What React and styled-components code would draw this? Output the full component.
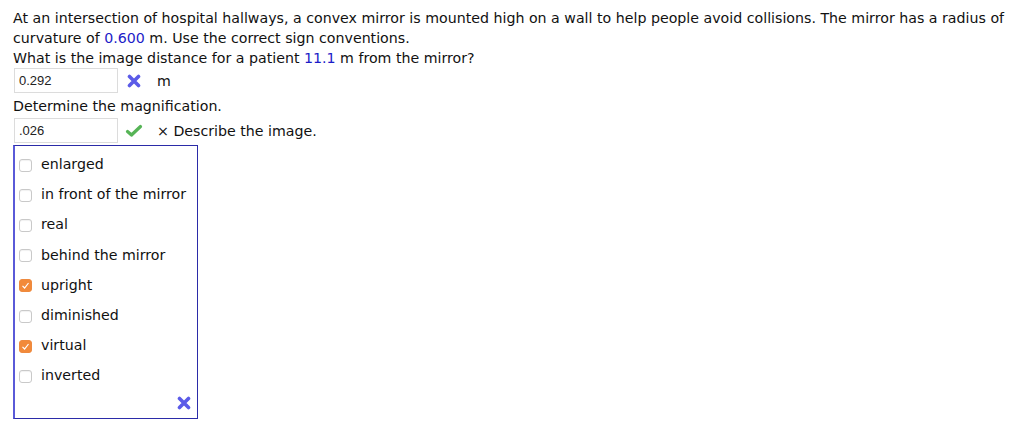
import React from "react";
import styled, { createGlobalStyle } from "styled-components";

const Global = createGlobalStyle`
  html, body { margin: 0; padding: 0; background: #fff; }
  body { font-family: "DejaVu Sans", Verdana, sans-serif; font-size: 14.2px; color: #111; }
`;

const Page = styled.div`
  padding: 8px 13px;
`;

const Para = styled.div`
  line-height: 20px;
`;

const Num = styled.span`
  color: #1c1cc8;
`;

const AnswerRow = styled.div`
  display: flex;
  align-items: center;
  height: 25px;
  margin: ${(p) => p.$mt || 0}px 0 ${(p) => p.$mb || 2}px 1px;
`;

const Input = styled.div`
  box-sizing: border-box;
  width: 104px;
  height: 25px;
  border: 1px solid #dcdcdc;
  padding: 0 4px;
  display: flex;
  align-items: center;
  font-family: "Liberation Sans", Arial, sans-serif;
  font-size: 13px;
  color: #222;
`;

const Mark = styled.span`
  display: inline-flex;
  align-items: center;
  justify-content: center;
  width: 18px;
  height: 16px;
  margin: 0 ${(p) => p.$after || 14}px 0 ${(p) => p.$gap || 8}px;
`;

const Unit = styled.span``;

const Box = styled.div`
  box-sizing: border-box;
  width: 185px;
  height: 274px;
  border: 1px solid #2b2ba8;
  border-left: 2px solid #5a5ad8;
  margin-top: 1px;
  padding: 3px 0 0 4px;
  position: relative;
`;

const Option = styled.label`
  display: flex;
  align-items: center;
  height: 30.2px;
  gap: 9px;
`;

const Check = styled.span`
  box-sizing: border-box;
  flex: none;
  width: 13px;
  height: 13px;
  border-radius: 3px;
  border: 1px solid ${(p) => (p.$on ? "#ee8a3f" : "#c9c9c9")};
  background: ${(p) => (p.$on ? "#f28a3a" : "#fff")};
  box-shadow: ${(p) => (p.$on ? "none" : "inset 0 1px 1px rgba(0,0,0,0.06)")};
  display: inline-flex;
  align-items: center;
  justify-content: center;
  margin-top: 2px;
`;

const BoxMark = styled.span`
  position: absolute;
  right: 6px;
  bottom: 8px;
  width: 14px;
  height: 14px;
  display: flex;
`;

const Cross = ({ size = 14 }) => (
  <svg width={size} height={size} viewBox="0 0 14 14">
    <path d="M2.5 2.5 L11.5 11.5 M11.5 2.5 L2.5 11.5" stroke="#5b5be8" strokeWidth="3.6" strokeLinecap="round" />
  </svg>
);

const Tick = () => (
  <svg width="18" height="14" viewBox="0 0 18 14">
    <path d="M2.5 7.5 L6.5 11 L15.5 2.5" stroke="#56b456" strokeWidth="3.2" fill="none" strokeLinecap="round" strokeLinejoin="round" />
  </svg>
);

const SmallTick = () => (
  <svg width="9" height="9" viewBox="0 0 9 9">
    <path d="M1.5 4.8 L3.6 7 L7.5 2" stroke="#fff" strokeWidth="1.2" fill="none" />
  </svg>
);

const options = [
  ["enlarged", false],
  ["in front of the mirror", false],
  ["real", false],
  ["behind the mirror", false],
  ["upright", true],
  ["diminished", false],
  ["virtual", true],
  ["inverted", false],
];

export default function App() {
  return (
    <Page>
      <Global />
      <Para>
        <span>
          At an intersection of hospital hallways, a convex mirror is mounted high on a wall to help people avoid
          collisions. The mirror has a radius of{" "}
        </span>
        <span>curvature of </span>
        <Num>0.600</Num>
        <span> m. Use the correct sign conventions.</span>
      </Para>
      <Para>
        What is the image distance for a patient <Num>11.1</Num> m from the mirror?
      </Para>
      <AnswerRow $mt={0} $mb={3}>
        <Input>0.292</Input>
        <Mark $gap={7} $after={14}>
          <Cross />
        </Mark>
        <Unit>m</Unit>
      </AnswerRow>
      <Para>Determine the magnification.</Para>
      <AnswerRow $mt={2} $mb={2}>
        <Input>.026</Input>
        <Mark $gap={7} $after={14}>
          <Tick />
        </Mark>
        <Unit>× Describe the image.</Unit>
      </AnswerRow>
      <Box>
        {options.map(([label, on]) => (
          <Option key={label}>
            <Check $on={on}>{on && <SmallTick />}</Check>
            <span>{label}</span>
          </Option>
        ))}
        <BoxMark>
          <Cross size={14} />
        </BoxMark>
      </Box>
    </Page>
  );
}
